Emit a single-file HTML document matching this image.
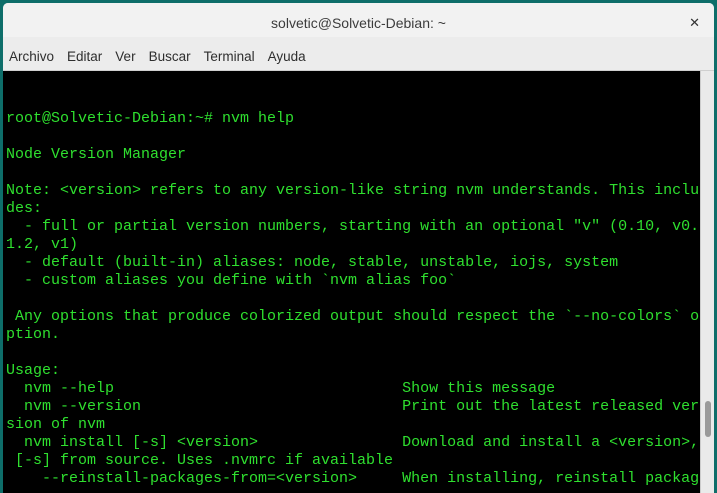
<html><head><style>
body{margin:0;width:717px;height:491px;overflow:hidden;background:#0e6e6a;font-family:"Liberation Sans",sans-serif}
.win{position:absolute;left:3px;top:3px;width:711px;height:490px;background:#e8e8e7;border-radius:5px 5px 0 0;overflow:hidden}
.title{height:34px;background:#f2f2f2;text-align:center;line-height:40px;font-size:14px;color:#3c3c3c}
.x{position:absolute;right:14px;top:12px;font-size:13px;color:#333;line-height:16px}
.menu{height:33px;background:#ececec;font-size:13.5px;color:#2e2e2e;line-height:40px;padding-left:6px;border-bottom:1px solid #cfcfcf}
.menu span{margin-right:13px}
.term{position:absolute;left:0;top:68px;width:697px;height:430px;background:#000;overflow:hidden}
pre{margin:0;padding:3px 0 0 3px;font-family:"Liberation Mono",monospace;font-size:15px;line-height:18px;color:#2fe02f;white-space:pre}
.sb{position:absolute;left:697px;top:68px;width:14px;height:430px;background:#eaeaea;border-left:1px solid #ccc}
.th{position:absolute;left:4px;top:330px;width:6px;height:36px;background:#9a9a9a;border-radius:3px}
</style></head><body><div class="win">
<div class="title">solvetic@Solvetic-Debian: ~<span class="x">✕</span></div>
<div class="menu"><span>Archivo</span><span>Editar</span><span>Ver</span><span>Buscar</span><span>Terminal</span><span>Ayuda</span></div>
<div class="term"><pre>


root@Solvetic-Debian:~# nvm help

Node Version Manager

Note: &lt;version&gt; refers to any version-like string nvm understands. This inclu
des:
  - full or partial version numbers, starting with an optional "v" (0.10, v0.
1.2, v1)
  - default (built-in) aliases: node, stable, unstable, iojs, system
  - custom aliases you define with `nvm alias foo`

 Any options that produce colorized output should respect the `--no-colors` o
ption.

Usage:
  nvm --help                                Show this message
  nvm --version                             Print out the latest released ver
sion of nvm
  nvm install [-s] &lt;version&gt;                Download and install a &lt;version&gt;,
 [-s] from source. Uses .nvmrc if available
    --reinstall-packages-from=&lt;version&gt;     When installing, reinstall packag</pre></div>
<div class="sb"><div class="th"></div></div>
</div></body></html>
